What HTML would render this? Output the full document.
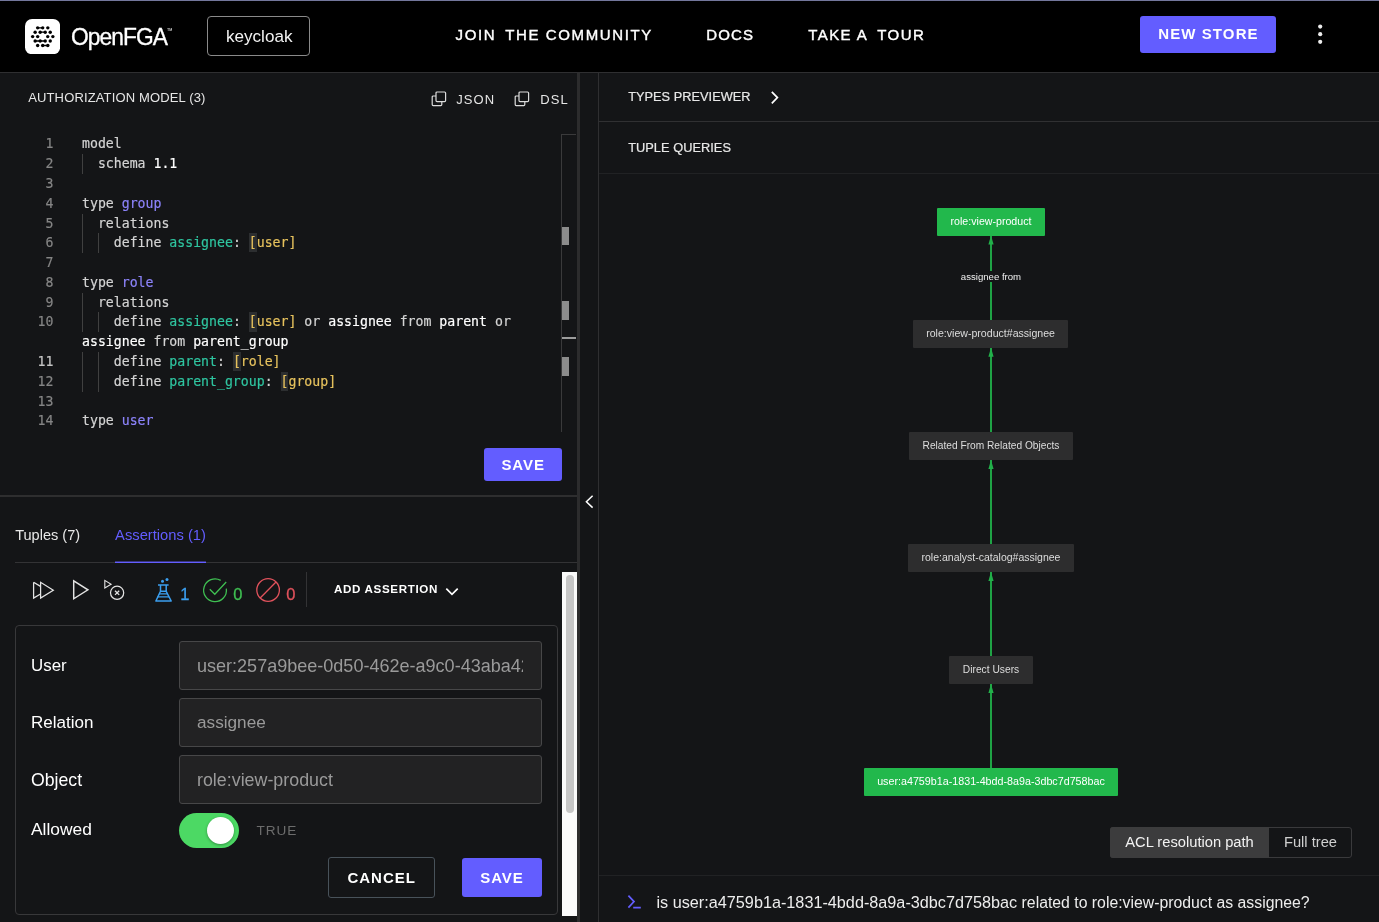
<!DOCTYPE html>
<html lang="en">
<head>
<meta charset="utf-8">
<title>OpenFGA Playground</title>
<style>
*{box-sizing:border-box;margin:0;padding:0}
html,body{width:1379px;height:922px;overflow:hidden;background:#141517;font-family:"Liberation Sans",sans-serif;color:#fff}
.a{position:absolute;white-space:nowrap}
#hdr{left:0;top:0;width:1379px;height:72px;background:#000}
#topline{left:0;top:0;width:1379px;height:1px;background:#73779c}
#hdrb{left:0;top:72px;width:1379px;height:1px;background:#2f2f31}
.nav{font-size:15px;font-weight:normal;-webkit-text-stroke:0.4px #fff;letter-spacing:1.62px;color:#fff;line-height:20px;top:24.5px}
.btnp{background:#635dff;color:#fff;font-weight:normal;-webkit-text-stroke:0.45px #fff;text-align:center;border-radius:3px}
.mono{font-family:"DejaVu Sans Mono","Liberation Mono",monospace;font-size:13.2px;line-height:19.8px;color:#d4d4d4;white-space:pre;-webkit-text-stroke:0.18px currentColor}
.ln{left:0;width:53.5px;text-align:right;color:#858585}
.cl{left:82px}
.bm{color:#e5c15d;background:#2c2e30;padding:2.2px 0}.kw{color:#d4d4d4}.ty{color:#8c83fa}.rel{color:#2fc5a0}.br{color:#e5c15d}.wh{color:#fff}
.guide{width:1px;background:#404040}
.lbl{font-size:17px;color:#fff;left:31px;line-height:20px}
.inp{left:179px;width:362.8px;background:#222223;border:1px solid #474748;border-radius:3px;color:#9a9a9a;font-size:17px;padding-left:17px;overflow:hidden}
.node{background:#2d2d2e;color:#ddd;font-size:10.5px;text-align:center;border-radius:1px}
.node.g{background:#22b84c;color:#fff}
.edge{left:990px;width:2px;background:#1fa345}
</style>
</head>
<body>
<div id="root" style="position:absolute;left:0;top:0;width:1379px;height:922px;will-change:transform">
<!-- HEADER -->
<div class="a" id="hdr"></div>
<div class="a" id="topline"></div>
<div class="a" id="hdrb"></div>

<!-- logo -->
<svg class="a" style="left:25px;top:18.9px" width="35.2" height="35.2" viewBox="0 0 35 35">
<rect x="0" y="0" width="35" height="35" rx="7" fill="#fff"/>
<g fill="#000" stroke="#000" stroke-width="1.4" stroke-linecap="round">
<g stroke="none">
<circle cx="12.6" cy="8.8" r="1.7"/><circle cx="17.6" cy="8.8" r="1.7"/><circle cx="22.7" cy="8.8" r="1.7"/>
<circle cx="10.1" cy="13.1" r="1.7"/><circle cx="15.1" cy="13.1" r="1.7"/><circle cx="20.1" cy="13.1" r="1.7"/><circle cx="25.1" cy="13.1" r="1.7"/>
<circle cx="7.6" cy="17.5" r="1.7"/><circle cx="12.6" cy="17.5" r="1.7"/><circle cx="22.6" cy="17.5" r="1.7"/><circle cx="27.7" cy="17.5" r="1.7"/>
<circle cx="10.1" cy="21.9" r="1.7"/><circle cx="15.1" cy="21.9" r="1.7"/><circle cx="20.1" cy="21.9" r="1.7"/><circle cx="25.1" cy="21.9" r="1.7"/>
<circle cx="12.6" cy="26.4" r="1.7"/><circle cx="17.6" cy="26.4" r="1.7"/><circle cx="22.7" cy="26.4" r="1.7"/>
</g>
<line x1="12.6" y1="8.8" x2="17.6" y2="8.8"/>
<line x1="15.1" y1="13.1" x2="20.1" y2="13.1"/>
<line x1="10.1" y1="21.9" x2="20.1" y2="21.9"/>
<line x1="17.6" y1="26.4" x2="22.7" y2="26.4"/>
</g>
</svg>
<div class="a" id="brand" style="left:70.9px;top:22.1px;font-size:22.8px;line-height:30px;letter-spacing:-0.93px;color:#fff;-webkit-text-stroke:0.3px #fff;transform:scaleY(1.03);transform-origin:0 23.2px">OpenFGA</div>
<div class="a" id="tm" style="left:167.2px;top:27.6px;font-size:10px;line-height:10px;color:#fff;letter-spacing:0;transform:scale(0.36);transform-origin:0 0">TM</div>

<div class="a" id="store" style="left:207px;top:16px;width:103px;height:40px;border:1px solid #8a8a8a;border-radius:4px;font-size:17.1px;line-height:39.4px;padding-left:1.4px;text-align:center;color:#f2f2f2">keycloak</div>

<div class="a nav" id="nav1" style="left:455.6px">JOIN<span style="margin-left:3.4px"> THE COMMUNITY</span></div>
<div class="a nav" id="nav2" style="left:706.3px;letter-spacing:1.1px">DOCS</div>
<div class="a nav" id="nav3" style="left:808.2px;letter-spacing:1.45px">TAKE A<span style="margin-left:3.6px"> TOUR</span></div>

<div class="a btnp" id="newstore" style="left:1140px;top:16px;width:136px;height:37px;font-size:15px;font-weight:bold;-webkit-text-stroke:0;line-height:36px;letter-spacing:1.1px;padding-left:0.9px">NEW STORE</div>
<svg class="a" style="left:1316px;top:21px" width="8" height="26" viewBox="0 0 8 26"><circle cx="4.2" cy="5.6" r="2.1" fill="#ececec"/><circle cx="4.2" cy="13.2" r="2.1" fill="#ececec"/><circle cx="4.2" cy="20.8" r="2.1" fill="#ececec"/></svg>

<!-- LEFT PANEL -->
<div class="a" id="amtitle" style="left:28.2px;top:88.8px;font-size:13px;line-height:18px;color:#e6e6e6;letter-spacing:0.14px">AUTHORIZATION MODEL (3)</div>

<!-- EDITOR -->
<div class="a mono ln" style="top:134.40px">1</div>
<div class="a mono cl" style="top:134.40px"><span class="kw">model</span></div>
<div class="a mono ln" style="top:154.18px">2</div>
<div class="a mono cl" style="top:154.18px"><span class="kw">  schema </span><span class="wh">1.1</span></div>
<div class="a mono ln" style="top:173.96px">3</div>
<div class="a mono ln" style="top:193.74px">4</div>
<div class="a mono cl" style="top:193.74px"><span class="kw">type </span><span class="ty">group</span></div>
<div class="a mono ln" style="top:213.52px">5</div>
<div class="a mono cl" style="top:213.52px"><span class="kw">  relations</span></div>
<div class="a mono ln" style="top:233.30px">6</div>
<div class="a mono cl" style="top:233.30px"><span class="kw">    define </span><span class="rel">assignee</span><span class="kw">: </span><span class="bm">[</span><span class="br">user]</span></div>
<div class="a mono ln" style="top:253.08px">7</div>
<div class="a mono ln" style="top:272.86px">8</div>
<div class="a mono cl" style="top:272.86px"><span class="kw">type </span><span class="ty">role</span></div>
<div class="a mono ln" style="top:292.64px">9</div>
<div class="a mono cl" style="top:292.64px"><span class="kw">  relations</span></div>
<div class="a mono ln" style="top:312.42px">10</div>
<div class="a mono cl" style="top:312.42px"><span class="kw">    define </span><span class="rel">assignee</span><span class="kw">: </span><span class="bm">[</span><span class="br">user]</span><span class="kw"> or </span><span class="wh">assignee</span><span class="kw"> from </span><span class="wh">parent</span><span class="kw"> or</span></div>
<div class="a mono cl" style="top:332.20px"><span class="wh">assignee</span><span class="kw"> from </span><span class="wh">parent_group</span></div>
<div class="a mono ln" style="top:351.98px;color:#c6c6c6">11</div>
<div class="a mono cl" style="top:351.98px"><span class="kw">    define </span><span class="rel">parent</span><span class="kw">: </span><span class="bm">[</span><span class="br">role]</span></div>
<div class="a mono ln" style="top:371.76px">12</div>
<div class="a mono cl" style="top:371.76px"><span class="kw">    define </span><span class="rel">parent_group</span><span class="kw">: </span><span class="bm">[</span><span class="br">group]</span></div>
<div class="a mono ln" style="top:391.54px">13</div>
<div class="a mono ln" style="top:411.32px">14</div>
<div class="a mono cl" style="top:411.32px"><span class="kw">type </span><span class="ty">user</span></div>
<div class="a guide" style="left:82px;top:154.18px;height:19.78px"></div>
<div class="a guide" style="left:82px;top:213.52px;height:39.56px"></div>
<div class="a guide" style="left:98px;top:233.30px;height:19.78px"></div>
<div class="a guide" style="left:82px;top:292.64px;height:39.56px"></div>
<div class="a guide" style="left:98px;top:312.42px;height:19.78px"></div>
<div class="a guide" style="left:82px;top:351.98px;height:39.56px"></div>
<div class="a guide" style="left:98px;top:351.98px;height:39.56px"></div>

<!-- copy icons + JSON / DSL -->
<svg class="a" style="left:430px;top:90px" width="18" height="18" viewBox="0 0 18 18" fill="none" stroke="#dcdcdc" stroke-width="1.2"><rect x="6" y="2" width="9.6" height="9.6" rx="1"/><path d="M6 6H3.2a1 1 0 0 0-1 1v7.6a1 1 0 0 0 1 1h7.6a1 1 0 0 0 1-1V11.6"/></svg>
<div class="a" id="json" style="left:456.2px;top:90.9px;font-size:13px;line-height:18px;letter-spacing:1.1px;color:#e6e6e6">JSON</div>
<svg class="a" style="left:513px;top:90px" width="18" height="18" viewBox="0 0 18 18" fill="none" stroke="#dcdcdc" stroke-width="1.2"><rect x="6" y="2" width="9.6" height="9.6" rx="1"/><path d="M6 6H3.2a1 1 0 0 0-1 1v7.6a1 1 0 0 0 1 1h7.6a1 1 0 0 0 1-1V11.6"/></svg>
<div class="a" id="dsl" style="left:540.2px;top:90.9px;font-size:13px;line-height:18px;letter-spacing:1.1px;color:#e6e6e6">DSL</div>

<!-- overview ruler -->
<div class="a" style="left:561px;top:134px;width:15px;height:298px;border-left:1px solid #3a3a3b;border-top:1px solid #3a3a3b"></div>
<div class="a" style="left:562px;top:227px;width:7px;height:18px;background:#8c8c8c"></div>
<div class="a" style="left:562px;top:301px;width:7px;height:19px;background:#8c8c8c"></div>
<div class="a" style="left:562px;top:357px;width:7px;height:19px;background:#8c8c8c"></div>
<div class="a" style="left:562px;top:337px;width:14px;height:2px;background:#9c9c9c"></div>

<div class="a btnp" id="save1" style="left:484px;top:448px;width:78px;height:33px;font-size:15px;font-weight:bold;-webkit-text-stroke:0;line-height:33.4px;letter-spacing:0.97px;padding-left:0.4px;border-radius:3px">SAVE</div>

<!-- horizontal divider -->
<div class="a" style="left:0;top:495px;width:577px;height:2px;background:#2e2e2f"></div>

<!-- tabs -->
<div class="a" id="tab1" style="left:15.2px;top:525px;font-size:14.55px;line-height:20px;color:#e8e8e8">Tuples (7)</div>
<div class="a" id="tab2" style="left:115.1px;top:525px;font-size:14.72px;line-height:20px;color:#635dff">Assertions (1)</div>
<div class="a" style="left:15px;top:562px;width:562px;height:1px;background:#333335"></div>
<div class="a" style="left:115px;top:562px;width:91px;height:1px;background:#635dff"></div><div class="a" style="left:115px;top:561px;width:91px;height:1px;background:rgba(99,93,255,.45)"></div>

<!-- toolbar icons -->
<svg class="a" style="left:28px;top:575px" width="100" height="30" viewBox="0 0 100 30" fill="none" stroke="#e4e4e4" stroke-width="1.25" stroke-linejoin="miter">
<path d="M5.6 7.3v15.8L12.5 19M5.6 7.3L12.5 11.4"/>
<path d="M12.6 7.3v15.8L25.3 15.2z"/>
<path d="M45.7 5.8v18L59.9 14.8z" stroke-width="1.45"/>
<path d="M76.8 5.4v7.6l6.3-3.8z" stroke-width="1.1"/>
<circle cx="89.1" cy="17.8" r="6.6"/>
<path d="M87 15.7l4.2 4.2M91.2 15.7l-4.2 4.2" stroke-width="1.3"/>
</svg>
<!-- flask -->
<svg class="a" style="left:153px;top:576px" width="22" height="28" viewBox="0 0 22 28" fill="none" stroke="#3b9ff0" stroke-width="1.5">
<circle cx="9.5" cy="5.3" r="1.5" fill="#3b9ff0" stroke="none"/><circle cx="14" cy="3.6" r="1.5" fill="#3b9ff0" stroke="none"/>
<path d="M5 9.1h10.6M7.5 9.1v6.2L2.9 25h15.3L13.2 15.3V9.1M7 15.3h6.6" stroke-linejoin="round"/>
<path d="M6 17.9h8.6M4.5 20.8h11.5" stroke-width="1.2"/>
</svg>
<div class="a" id="cnt1" style="left:180.2px;top:584px;font-size:16.5px;line-height:20px;color:#3b9ff0;-webkit-text-stroke:0.3px #3b9ff0">1</div>
<svg class="a" style="left:201px;top:576px" width="28" height="28" viewBox="0 0 28 28" fill="none" stroke="#3fbf52" stroke-width="1.3"><path d="M25.3 12.6a11.4 11.4 0 1 1-5.6-8.2"/><path d="M8.8 13.2l5 5L25.2 6"/></svg>
<div class="a" id="cnt2" style="left:233.2px;top:584px;font-size:16.5px;line-height:20px;color:#3fbf52;-webkit-text-stroke:0.3px #3fbf52">0</div>
<svg class="a" style="left:254px;top:576px" width="28" height="28" viewBox="0 0 28 28" fill="none" stroke="#e0525c" stroke-width="1.3"><circle cx="14.1" cy="14" r="11.3"/><path d="M6.2 22L22 6"/></svg>
<div class="a" id="cnt3" style="left:286.2px;top:584px;font-size:16.5px;line-height:20px;color:#e0525c;-webkit-text-stroke:0.3px #e0525c">0</div>
<div class="a" style="left:306px;top:572px;width:1px;height:35px;background:#333335"></div>
<div class="a" id="addas" style="left:334px;top:580px;font-size:11.6px;line-height:18px;font-weight:bold;letter-spacing:0.65px;color:#fff">ADD ASSERTION</div>
<svg class="a" style="left:444px;top:585px" width="16" height="12" viewBox="0 0 16 12" fill="none" stroke="#fff" stroke-width="1.7"><path d="M2.3 3.6L8 9.3l5.7-5.7"/></svg>

<!-- form card -->
<div class="a" style="left:15px;top:625px;width:543px;height:290px;border:1px solid #38383a;border-radius:4px"></div>
<div class="a lbl" id="l1" style="top:656.2px;font-size:16.9px">User</div>
<div class="a lbl" id="l2" style="top:713.4px;font-size:17.05px">Relation</div>
<div class="a lbl" id="l3" style="top:770.2px;font-size:17.7px">Object</div>
<div class="a lbl" id="l4" style="top:819.2px;font-size:17.4px">Allowed</div>
<div class="a inp" style="top:641px;height:49px;line-height:48.6px;font-size:18.05px"><div id="i1" style="width:326.2px;overflow:hidden">user:257a9bee-0d50-462e-a9c0-43aba42f5c1d</div></div>
<div class="a inp" id="i2" style="top:698px;height:49px;line-height:46.8px;font-size:17.2px">assignee</div>
<div class="a inp" id="i3" style="top:755px;height:49px;line-height:49.4px;font-size:17.85px">role:view-product</div>
<div class="a" style="left:179px;top:813px;width:60px;height:35px;border-radius:18px;background:#4cd964"></div>
<div class="a" style="left:207px;top:816.5px;width:27px;height:27px;border-radius:50%;background:#fff;box-shadow:0 1px 3px rgba(0,0,0,.35)"></div>
<div class="a" id="true" style="left:256.6px;top:820.8px;font-size:13.6px;line-height:20px;letter-spacing:0.9px;color:#6c6c6c">TRUE</div>
<div class="a" id="cancel" style="left:328px;top:857px;width:107px;height:41px;border:1px solid #48525a;border-radius:3px;font-size:15px;font-weight:bold;letter-spacing:1px;padding-left:0.4px;line-height:39.2px;text-align:center;color:#fff">CANCEL</div>
<div class="a btnp" id="save2" style="left:462px;top:858px;width:80px;height:39px;font-size:15px;font-weight:bold;-webkit-text-stroke:0;line-height:39.2px;letter-spacing:0.97px;padding-left:0px;border-radius:3px">SAVE</div>

<!-- scrollbar -->
<div class="a" style="left:562px;top:572px;width:15px;height:344px;background:#fafafa"></div>
<div class="a" style="left:566px;top:575px;width:8px;height:238px;border-radius:4px;background:#c6c6c6"></div>

<!-- SPLITTERS -->
<div class="a" style="left:577px;top:73px;width:3px;height:849px;background:#2c2c2d"></div>
<div class="a" style="left:598px;top:73px;width:1px;height:849px;background:#2f2f31"></div>
<svg class="a" style="left:583px;top:493px" width="14" height="18" viewBox="0 0 14 18" fill="none" stroke="#fff" stroke-width="1.5"><path d="M9.6 2.8L3.4 8.8l6.2 5.8"/></svg>

<!-- RIGHT PANEL -->
<div class="a" id="tp" style="left:628.2px;top:88px;font-size:12.75px;line-height:18px;color:#e8e8e8;letter-spacing:0.03px;-webkit-text-stroke:0.2px #e8e8e8">TYPES PREVIEWER</div>
<svg class="a" style="left:767px;top:89px" width="16" height="18" viewBox="0 0 16 18" fill="none" stroke="#fff" stroke-width="1.7"><path d="M4.8 2.9L10.4 8.6l-5.6 5.7"/></svg>
<div class="a" style="left:599px;top:121px;width:780px;height:1px;background:#303032"></div>
<div class="a" id="tq" style="left:628.2px;top:138.5px;font-size:12.8px;line-height:18px;color:#e8e8e8;letter-spacing:0.03px;-webkit-text-stroke:0.2px #e8e8e8">TUPLE QUERIES</div>
<div class="a" style="left:599px;top:173px;width:780px;height:1px;background:#212224"></div>

<!-- graph -->
<div class="a edge" style="top:236px;height:532px"></div>
<svg class="a" style="left:981px;top:230px" width="20" height="470" viewBox="0 0 20 470" fill="#22b04a">
<path d="M10 5.5l2.6 9h-5.2z"/><path d="M10 117.7l2.6 9h-5.2z"/><path d="M10 229.9l2.6 9h-5.2z"/><path d="M10 342.1l2.6 9h-5.2z"/><path d="M10 454l2.6 9h-5.2z"/>
</svg>
<div class="a" id="elab" style="left:958px;top:271px;width:66px;height:11px;background:#141517;font-size:9.6px;line-height:11px;text-align:center;color:#f0f0f0">assignee from</div>
<div class="a node g" id="n1" style="left:937px;top:207.5px;width:108px;height:28px;line-height:27px;font-size:10.63px">role:view-product</div>
<div class="a node" id="n2" style="left:913px;top:319.7px;width:155.2px;height:28px;line-height:27px;font-size:10.58px">role:view-product#assignee</div>
<div class="a node" id="n3" style="left:908.8px;top:431.9px;width:164.4px;height:28px;line-height:27px;font-size:10.19px">Related From Related Objects</div>
<div class="a node" id="n4" style="left:908px;top:544.1px;width:166px;height:28px;line-height:27px;font-size:10.5px">role:analyst-catalog#assignee</div>
<div class="a node" id="n5" style="left:949px;top:656px;width:84px;height:28px;line-height:27px;font-size:10.25px">Direct Users</div>
<div class="a node g" id="n6" style="left:863.6px;top:768px;width:254.8px;height:28.2px;line-height:27px;font-size:10.73px">user:a4759b1a-1831-4bdd-8a9a-3dbc7d758bac</div>

<!-- view toggle -->
<div class="a" style="left:1110px;top:827px;width:242px;height:31px;border:1px solid #3a3a3c;border-radius:3px"></div>
<div class="a" id="acl" style="left:1110px;top:827px;width:159px;height:31px;background:#3c3c3d;border-radius:3px 0 0 3px;font-size:14.7px;line-height:31px;text-align:center;color:#f2f2f2">ACL resolution path</div>
<div class="a" id="full" style="left:1269px;top:827px;width:83px;height:31px;font-size:14.7px;line-height:31px;text-align:center;color:#d0d0d0">Full tree</div>

<div class="a" style="left:599px;top:875px;width:780px;height:1px;background:#212224"></div>
<svg class="a" style="left:624px;top:890px" width="22" height="22" viewBox="0 0 22 22" fill="none" stroke="#635dff" stroke-width="1.7"><path d="M4.4 5.6l5.6 6-5.6 6M9.2 17.6h7.6"/></svg>
<div class="a" id="query" style="left:656.5px;top:892px;font-size:16.23px;line-height:20px;color:#ededed">is user:a4759b1a-1831-4bdd-8a9a-3dbc7d758bac<span style="font-size:15.81px"> related to role:view-product as assignee?</span></div>

</div>
</body>
</html>
